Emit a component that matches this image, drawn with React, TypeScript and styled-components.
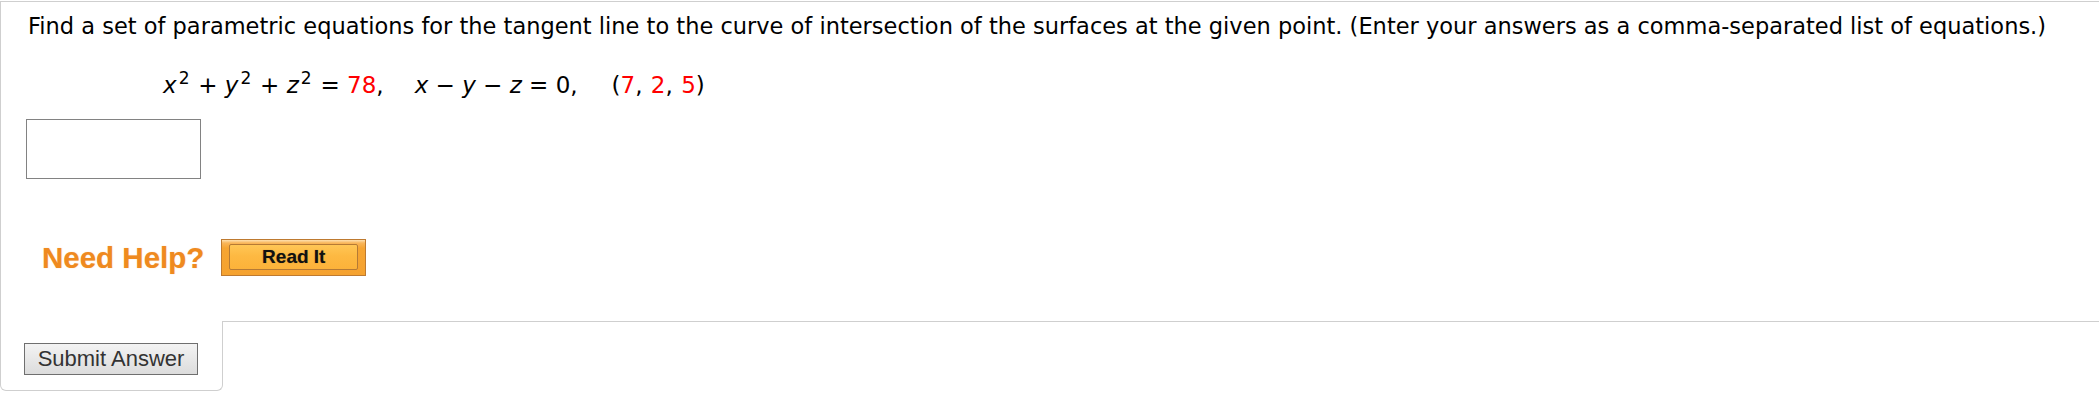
import React from "react";
import styled, { createGlobalStyle } from "styled-components";

const Global = createGlobalStyle`
  html, body { margin: 0; padding: 0; background: #ffffff; }
  body { font-family: "DejaVu Sans", Verdana, sans-serif; color: #000; }
`;

const Page = styled.div`
  padding-top: 1px;
  width: 100%;
`;

const Panel = styled.section`
  border-top: 1px solid #cfcfcf;
  border-left: 1px solid #cfcfcf;
  border-bottom: 1px solid #cfcfcf;
  padding: 11px 0 45px 0;
`;

const Question = styled.p`
  margin: 0 0 0 27px;
  font-family: "DejaVu Sans", Verdana, sans-serif;
  font-size: 22.5px;
  line-height: 26px;
  white-space: nowrap;
`;

const Equation = styled.div`
  margin: 33px 0 0 162px;
  font-family: "DejaVu Sans", Verdana, sans-serif;
  font-size: 23px;
  line-height: 26px;
  white-space: nowrap;
`;

const Var = styled.i`
  font-style: italic;
`;

const Sup = styled.sup`
  font-size: 0.74em;
  line-height: 0;
  vertical-align: super;
  margin-left: 2px;
  margin-right: 1.5px;
`;

const Given = styled.span`
  color: #ff0000;
`;

const Sep = styled.span<{ w: number }>`
  display: inline-block;
  width: ${(p) => p.w}px;
`;

const Point = styled.span`
  word-spacing: 1px;
`;

const AnswerBox = styled.input`
  display: block;
  box-sizing: border-box;
  margin: 21px 0 0 25px;
  width: 175px;
  height: 60px;
  border: 1px solid #828282;
  background: #fff;
  padding: 0 4px;
  outline: none;
`;

const HelpRow = styled.div`
  display: flex;
  align-items: center;
  gap: 17px;
  margin: 59px 0 0 41px;
`;

const HelpLabel = styled.span`
  font-family: "Liberation Sans", Arial, sans-serif;
  font-weight: bold;
  font-size: 29.5px;
  line-height: 37px;
  color: #ef8a1f;
  text-shadow: 0 0 1px rgba(239, 138, 31, 0.5);
  padding-top: 1px;
`;

const ReadIt = styled.button`
  box-sizing: border-box;
  width: 145px;
  height: 37px;
  padding: 4px 7px 5px 7px;
  border: 1px solid #be7a30;
  background: linear-gradient(#fde0b0 0px, #f9b65a 3px, #f6a533 8px, #f5a22f 100%);
  cursor: pointer;
  display: flex;
`;

const ReadItFace = styled.span`
  flex: 1;
  display: flex;
  align-items: center;
  justify-content: center;
  border: 1px solid #b57a35;
  border-radius: 2px;
  background: linear-gradient(#ffc656 0%, #fdb942 45%, #fcb23a 100%);
  font-family: "Liberation Sans", Arial, sans-serif;
  font-weight: bold;
  font-size: 19px;
  color: #111;
  text-shadow: 0 0 1px rgba(0, 0, 0, 0.35);
`;

const SubmitTab = styled.div`
  box-sizing: border-box;
  width: 223px;
  margin-top: -1px;
  background: #fff;
  border-left: 1px solid #cfcfcf;
  border-right: 1px solid #cfcfcf;
  border-bottom: 1px solid #cfcfcf;
  border-radius: 0 0 6px 6px;
  padding: 22px 0 15px 23px;
`;

const SubmitButton = styled.button`
  box-sizing: border-box;
  display: block;
  width: 174px;
  height: 32px;
  padding: 0;
  border: 1px solid #6f6f6f;
  background: linear-gradient(#f3f3f3, #dcdcdc);
  font-family: "Liberation Sans", Arial, sans-serif;
  font-size: 22px;
  color: #333;
  cursor: pointer;
`;

export default function App() {
  return (
    <Page>
      <Global />
      <Panel>
        <Question>
          Find a set of parametric equations for the tangent line to the curve of intersection of the surfaces at the given point. (Enter your answers as a comma-separated list of equations.)
        </Question>
        <Equation>
          <Var>x</Var>
          <Sup>2</Sup> + <Var>y</Var>
          <Sup>2</Sup> + <Var>z</Var>
          <Sup>2</Sup> = <Given>78</Given>,<Sep w={31} />
          <Var>x</Var> − <Var>y</Var> − <Var>z</Var> = 0,<Sep w={34} />
          <Point>
            (<Given>7</Given>, <Given>2</Given>, <Given>5</Given>)
          </Point>
        </Equation>
        <AnswerBox type="text" aria-label="answer" />
        <HelpRow>
          <HelpLabel>Need Help?</HelpLabel>
          <ReadIt type="button">
            <ReadItFace>Read It</ReadItFace>
          </ReadIt>
        </HelpRow>
      </Panel>
      <SubmitTab>
        <SubmitButton type="button">Submit Answer</SubmitButton>
      </SubmitTab>
    </Page>
  );
}
